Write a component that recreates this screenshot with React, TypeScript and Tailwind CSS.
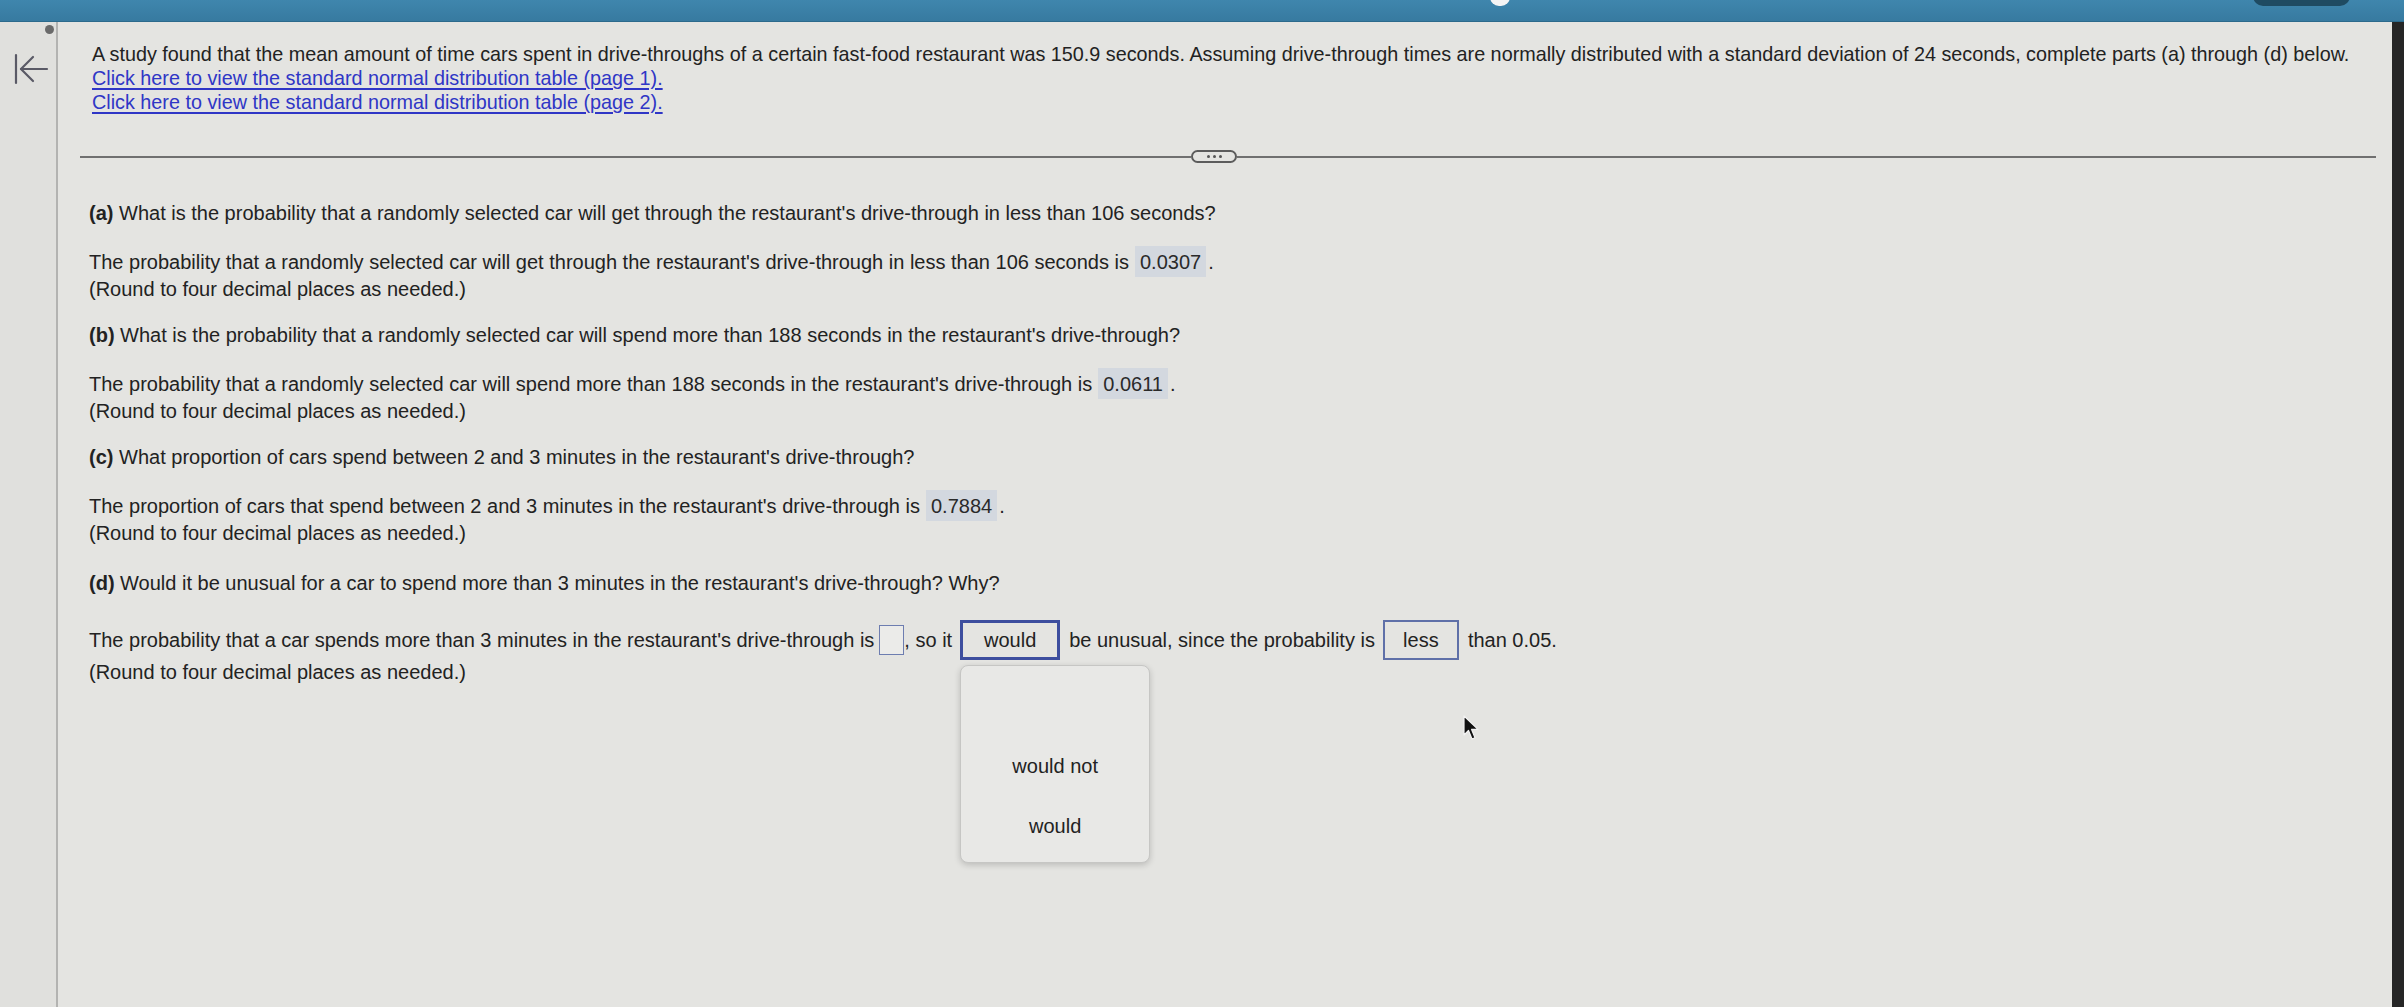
import React from "react";

function ValueBox({ v }: { v: string }) {
  return (
    <span className="inline-flex items-center h-[31px] px-[5px] bg-[#d3d8df] ml-[6px] text-[#2a2a2a]">{v}</span>
  );
}

function Part({
  label,
  question,
  answer,
  value,
  first,
}: {
  label: string;
  question: string;
  answer: string;
  value: string;
  first?: boolean;
}) {
  return (
    <div className={first ? "" : "mt-[22px]"}>
      <div className="leading-[24px]">
        <span className="font-bold">{label}</span> {question}
      </div>
      <div className="mt-[21px] h-[31px] flex items-center whitespace-pre">
        <span>{answer}</span>
        <ValueBox v={value} />
        <span className="ml-[2px]">.</span>
      </div>
      <div className="leading-[24px]">(Round to four decimal places as needed.)</div>
    </div>
  );
}

export default function App() {
  return (
    <div className="relative w-[2404px] h-[1007px] overflow-hidden flex flex-col bg-[#e4e4e1] text-[#222] text-[20px] font-['Liberation_Sans',Arial,Helvetica,sans-serif]">
      {/* top bar */}
      <div className="relative h-[22px] shrink-0 bg-gradient-to-b from-[#3f86ad] to-[#377aa0] border-b border-[#2c6a8c]">
        <div className="absolute left-[1490px] top-[-12px] w-[20px] h-[18px] rounded-full bg-[#f4f4f4]" />
        <div className="absolute left-[2253px] top-[-20px] w-[97px] h-[26px] rounded-[10px] bg-[#1f4b62]" />
      </div>
      <div className="flex flex-1 min-h-0">
        {/* sidebar */}
        <aside className="relative w-[58px] shrink-0 bg-[#e0e0dd] border-r-2 border-[#b3b3b1] flex flex-col items-center pt-[31px]">
          <div className="absolute left-[45px] top-[3px] w-[9px] h-[9px] rounded-full bg-[#6a6a6a]" />
          <svg width="36" height="32" viewBox="0 0 36 32" fill="none" stroke="#5a5a66" strokeWidth="2.2" strokeLinecap="round" strokeLinejoin="round" className="ml-[6px]">
            <line x1="3" y1="2" x2="3" y2="30" />
            <line x1="8" y1="16" x2="34" y2="16" />
            <polyline points="20,4 8,16 20,28" />
          </svg>
        </aside>
        {/* main */}
        <main className="relative flex-1 min-w-0">
          <div className="pl-[34px] pt-[20px] leading-[24px] text-[19.8px]">
            <div>
              A study found that the mean amount of time cars spent in drive-throughs of a certain fast-food restaurant was 150.9 seconds. Assuming drive-through times are normally distributed with a standard deviation of 24 seconds, complete parts (a) through (d) below.
            </div>
            <div className="text-[#2f36c6] underline underline-offset-[3px] decoration-[1.5px]">
              Click here to view the standard normal distribution table (page 1).
            </div>
            <div className="text-[#2f36c6] underline underline-offset-[3px] decoration-[1.5px]">
              Click here to view the standard normal distribution table (page 2).
            </div>
          </div>

          {/* separator */}
          <div className="mt-[36px] ml-[22px] mr-[16px] h-[13px] flex items-center">
            <div className="w-[1111px] h-[2px] bg-[#707070]" />
            <div className="w-[46px] h-[13px] rounded-full border-2 border-[#5c5c5c] flex items-center justify-center gap-[3px]">
              <span className="w-[3px] h-[3px] rounded-full bg-[#555]" />
              <span className="w-[3px] h-[3px] rounded-full bg-[#555]" />
              <span className="w-[3px] h-[3px] rounded-full bg-[#555]" />
            </div>
            <div className="flex-1 h-[2px] bg-[#707070]" />
          </div>

          <div className="pl-[31px] mt-[38px]">
            <Part
              first
              label="(a)"
              question="What is the probability that a randomly selected car will get through the restaurant's drive-through in less than 106 seconds?"
              answer="The probability that a randomly selected car will get through the restaurant's drive-through in less than 106 seconds is"
              value="0.0307"
            />
            <Part
              label="(b)"
              question="What is the probability that a randomly selected car will spend more than 188 seconds in the restaurant's drive-through?"
              answer="The probability that a randomly selected car will spend more than 188 seconds in the restaurant's drive-through is"
              value="0.0611"
            />
            <Part
              label="(c)"
              question="What proportion of cars spend between 2 and 3 minutes in the restaurant's drive-through?"
              answer="The proportion of cars that spend between 2 and 3 minutes in the restaurant's drive-through is"
              value="0.7884"
            />

            <div className="mt-[26px]">
              <div className="leading-[24px]">
                <span className="font-bold">(d)</span> Would it be unusual for a car to spend more than 3 minutes in the restaurant's drive-through? Why?
              </div>
              <div className="mt-[25px] h-[40px] flex items-center whitespace-pre">
                <span>The probability that a car spends more than 3 minutes in the restaurant's drive-through is</span>
                <span className="ml-[5px] w-[25px] h-[30px] border-[1.5px] border-[#6d7db0] bg-[#ebebe9]" />
                <span>, so it</span>
                <div className="relative ml-[8px]">
                  <div className="w-[100px] h-[40px] border-[3px] border-[#3d4e9e] flex items-center justify-center">would</div>
                  <div className="absolute left-0 top-[45px] w-[190px] h-[198px] rounded-[8px] border border-[#c6c6c4] bg-[#e8e8e6] shadow-[0_2px_6px_rgba(0,0,0,0.18)] pt-[10px] flex flex-col z-10">
                    <div className="h-[60px]" />
                    <div className="h-[60px] flex items-center justify-center">would not</div>
                    <div className="h-[60px] flex items-center justify-center">would</div>
                  </div>
                </div>
                <span className="ml-[9px]">be unusual, since the probability is</span>
                <div className="ml-[8px] w-[76px] h-[40px] border-2 border-[#5f70a8] flex items-center justify-center">less</div>
                <span className="ml-[9px]">than 0.05.</span>
              </div>
              <div className="leading-[24px]">(Round to four decimal places as needed.)</div>
            </div>
          </div>
        </main>
        <div className="w-[12px] shrink-0 bg-[#262626]" />
      </div>

      {/* mouse cursor */}
      <svg className="absolute left-[1462px] top-[715px]" width="18" height="26" viewBox="0 0 18 26">
        <path d="M2 1 L2 20 L6.5 15.5 L10 24 L13 22.7 L9.6 14.4 L16 14.4 Z" fill="#111" stroke="#f2f2f2" strokeWidth="1.2" strokeLinejoin="round" />
      </svg>
    </div>
  );
}
